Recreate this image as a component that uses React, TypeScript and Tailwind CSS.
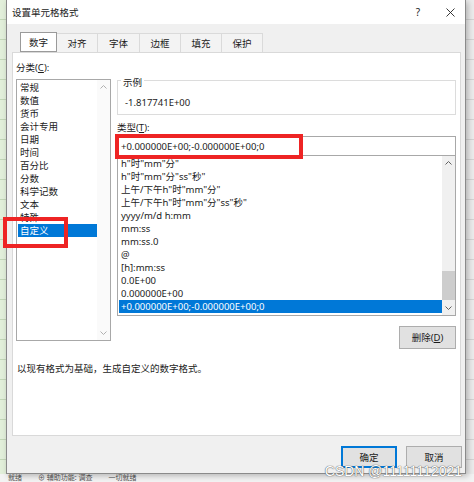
import React from 'react';

const tabs = [
  { label: '数字', w: 'w-[37px]' },
  { label: '对齐', w: 'w-[41px]' },
  { label: '字体', w: 'w-[42px]' },
  { label: '边框', w: 'w-[41px]' },
  { label: '填充', w: 'w-[41px]' },
  { label: '保护', w: 'w-[41px]' },
];

const categories = ['常规', '数值', '货币', '会计专用', '日期', '时间', '百分比', '分数', '科学记数', '文本', '特殊', '自定义'];

const formats = [
  'h"时"mm"分"',
  'h"时"mm"分"ss"秒"',
  '上午/下午h"时"mm"分"',
  '上午/下午h"时"mm"分"ss"秒"',
  'yyyy/m/d h:mm',
  'mm:ss',
  'mm:ss.0',
  '@',
  '[h]:mm:ss',
  '0.0E+00',
  '0.000000E+00',
  '+0.000000E+00;-0.000000E+00;0',
];

function Chevron({ up, color = '#606060' }: { up?: boolean; color?: string }) {
  return (
    <svg width="7" height="4" viewBox="0 0 7 4" fill="none">
      <path d={up ? 'M0.5 3.5 L3.5 0.5 L6.5 3.5' : 'M0.5 0.5 L3.5 3.5 L6.5 0.5'} stroke={color} strokeWidth="1" />
    </svg>
  );
}

function TitleBar() {
  return (
    <div className="flex h-[24px] items-center bg-white pl-[5px]">
      <span>设置单元格格式</span>
      <div className="ml-auto w-[34px] text-center text-[10px]">?</div>
      <div className="flex w-[30px] justify-center">
        <svg width="9" height="9" viewBox="0 0 9 9">
          <path d="M0.5 0.5 L8.5 8.5 M8.5 0.5 L0.5 8.5" stroke="#222" strokeWidth="0.9" />
        </svg>
      </div>
    </div>
  );
}

function Tabs() {
  return (
    <div className="flex h-[20px] items-end pl-[8px]">
      {tabs.map((t, i) =>
        i === 0 ? (
          <div key={t.label} className={`${t.w} flex h-[20px] items-center justify-center border border-[#9a9a9a] bg-white`}>
            {t.label}
          </div>
        ) : (
          <div key={t.label} className={`${t.w} flex h-[19px] items-center justify-center border-t border-r border-[#dadada] bg-[#f3f3f3]`}>
            {t.label}
          </div>
        ),
      )}
    </div>
  );
}

function CategoryList() {
  return (
    <div className="flex h-[262px] w-[95px] border border-[#a8a8a8] bg-white">
      <div className="flex-1 pt-[1px]">
        {categories.map((c) => (
          <div
            key={c}
            className={`ml-px h-[13px] pl-[2px] ${c === '自定义' ? 'bg-[#0078d7] text-white' : ''}`}
          >
            {c}
          </div>
        ))}
      </div>
      <div className="flex w-[13px] flex-col items-center justify-between bg-[#fafafa] py-[5px]">
        <Chevron up color="#b0b0b0" />
        <Chevron color="#b0b0b0" />
      </div>
    </div>
  );
}

function FormatList() {
  return (
    <div className="flex h-[160px] w-[339px] border border-t-0 border-[#a8a8a8] bg-white">
      <div className="flex-1 pt-[1px]">
        {formats.map((f, i) => (
          <div
            key={f}
            className={`ml-px h-[13px] whitespace-pre pl-[2px] ${i === formats.length - 1 ? 'bg-[#0078d7] text-white' : ''}`}
          >
            {f}
          </div>
        ))}
      </div>
      <div className="flex w-[13px] flex-col bg-[#f0f0f0]">
        <div className="flex h-[14px] items-center justify-center">
          <Chevron up />
        </div>
        <div className="flex-1">
          <div className="mt-[101px] h-[29px] bg-[#cdcdcd]" />
        </div>
        <div className="flex h-[14px] items-center justify-center">
          <Chevron />
        </div>
      </div>
    </div>
  );
}

function Panel() {
  return (
    <div className="ml-[5px] flex h-[384px] w-[449px] flex-col border border-[#d9d9d9] bg-white">
      <div className="flex pl-[3px] pt-[8px]">
        <div className="flex w-[95px] flex-col">
          <div className="h-[13px]">
            分类(<span className="underline">C</span>):
          </div>
          <div className="mt-[5px]">
            <CategoryList />
          </div>
        </div>
        <div className="ml-[6px] flex w-[340px] flex-col">
          <fieldset className="mt-[10px] w-[339px] border border-[#dcdcdc] pb-[5px]">
            <legend className="ml-[3px] px-[2px] pt-[5px] leading-[13px]">示例</legend>
            <div className="mt-[7px] h-[13px] pl-[7px]">-1.817741E+00</div>
          </fieldset>
          <div className="mt-[6px] h-[13px]">
            类型(<span className="underline">T</span>):
          </div>
          <div className="mt-[2px] flex h-[20px] w-[339px] items-center border border-[#a8a8a8] pl-[3px]">
            +0.000000E+00;-0.000000E+00;0
          </div>
          <FormatList />
          <button className="ml-auto mr-px mt-[10px] flex h-[23px] w-[57px] items-center justify-center border border-[#adadad] bg-[#e1e1e1]">
            删除(<span className="underline">D</span>)
          </button>
        </div>
      </div>
      <p className="mt-[13px] pl-[4px]">以现有格式为基础，生成自定义的数字格式。</p>
    </div>
  );
}

function Footer() {
  return (
    <div className="flex justify-end gap-[9px] pr-[3px] pt-[10px]">
      <button className="flex h-[22px] w-[56px] items-center justify-center border-2 border-[#0078d7] bg-[#e1e1e1]">确定</button>
      <button className="flex h-[22px] w-[56px] items-center justify-center border border-[#adadad] bg-[#e1e1e1]">取消</button>
    </div>
  );
}

export default function App() {
  return (
    <div className="relative h-[482px] w-[474px] overflow-hidden bg-[#e8e8e8] font-['Noto_Sans','Noto_Sans_CJK_SC',sans-serif] text-[9.5px] leading-[13px] text-[#1b1b1b]">
      <div className="flex h-[474px]">
        <div className="w-[6px] bg-[repeating-linear-gradient(to_bottom,#e2efda_0px,#e2efda_19px,#c3d6b8_19px,#c3d6b8_20px)]" />
        <div className="relative z-10 flex h-[474px] w-[460px] flex-col border-x border-b border-[#8a8a8a] bg-[#f0f0f0] shadow-[2px_2px_6px_rgba(0,0,0,0.25)]">
          <TitleBar />
          <div className="pt-[8px]">
            <div className="pl-[5px]">
              <Tabs />
            </div>
            <Panel />
          </div>
          <Footer />
        </div>
        <div className="flex-1 bg-[repeating-linear-gradient(to_bottom,#ececec_0px,#ececec_19px,#d4d4d4_19px,#d4d4d4_20px)]" />
      </div>
      <div className="flex h-[8px] gap-[16px] bg-[#f3f3f3] pl-[8px] text-[7px] leading-[8px] text-[#555]">
        <span>就绪</span>
        <span>⊕ 辅助功能: 调查</span>
        <span>一切就绪</span>
      </div>

      <div className="pointer-events-none absolute left-[3px] top-[217px] z-20 h-[31px] w-[65px] border-[4px] border-[#ee2424]" />
      <div className="pointer-events-none absolute left-[115px] top-[134px] z-20 h-[25px] w-[188px] border-[4px] border-[#ee2424]" />

      <div className="pointer-events-none absolute bottom-[3px] right-[12px] z-20 font-['Liberation_Sans',sans-serif] text-[14px] leading-[16px] text-white [text-shadow:0_0_1px_#555,0_0_1px_#555]">
        CSDN @11111112021
      </div>
    </div>
  );
}
